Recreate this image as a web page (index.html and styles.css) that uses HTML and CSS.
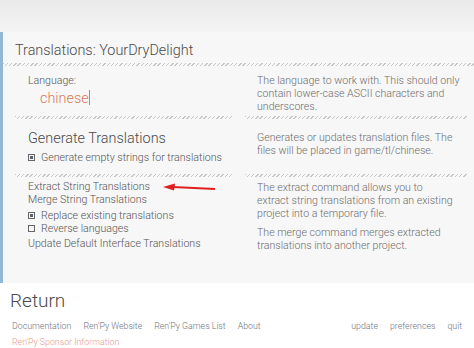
FILE: index.html
```html
<!DOCTYPE html>
<html>
<head>
<meta charset="utf-8">
<link rel="stylesheet" href="styles.css">
</head>
<body>
<div class="topband"></div>
<div class="panel">
  <div class="title">Translations: YourDryDelight</div>
  <div class="hatch full"></div>
  <div class="grid">
    <div class="cell left lang">
      <div class="label">Language:</div>
      <div class="input">chinese<span class="caret"></span></div>
    </div>
    <div class="cell right lang">
      <p>The language to work with. This should only<br>contain lower-case ASCII characters and<br>underscores.</p>
    </div>
    <div class="hatch"></div>
    <div class="hatch"></div>
    <div class="cell left gen">
      <div class="heading">Generate Translations</div>
      <div class="check"><span class="box on"></span>Generate empty strings for translations</div>
    </div>
    <div class="cell right gen">
      <p>Generates or updates translation files. The<br>files will be placed in game/tl/chinese.</p>
    </div>
    <div class="hatch"></div>
    <div class="hatch"></div>
    <div class="cell left ext">
      <div class="link">Extract String Translations</div>
      <div class="link">Merge String Translations</div>
      <div class="check first"><span class="box on"></span>Replace existing translations</div>
      <div class="check"><span class="box"></span>Reverse languages</div>
      <div class="link last">Update Default Interface Translations</div>
      <svg class="arrow" width="60" height="10" viewBox="0 0 60 10">
        <path d="M54 6 L12 4" stroke="#e02020" stroke-width="2" fill="none"/>
        <path d="M2 4 L14 0.5 L13 7.5 Z" fill="#e02020"/>
      </svg>
    </div>
    <div class="cell right ext">
      <p>The extract command allows you to<br>extract string translations from an existing<br>project into a temporary file.</p>
      <p class="second">The merge command merges extracted<br>translations into another project.</p>
    </div>
  </div>
</div>
<div class="footer">
  <div class="return">Return</div>
  <div class="links">
    <div class="group">
      <span>Documentation</span><span>Ren'Py Website</span><span>Ren'Py Games List</span><span>About</span>
    </div>
    <div class="group">
      <span>update</span><span>preferences</span><span>quit</span>
    </div>
  </div>
  <div class="sponsor">Ren'Py Sponsor Information</div>
</div>
</body>
</html>
```
FILE: styles.css
```css
html, body {
  margin: 0;
  padding: 0;
  background: #ffffff;
}
body {
  width: 474px;
  height: 348px;
  overflow: hidden;
  font-family: Roboto, "Liberation Sans", sans-serif;
  font-weight: 300;
  color: #555;
}
.topband {
  height: 32px;
  background: linear-gradient(#e9e9e9, #f4f4f4);
}
.panel {
  background: #f7f7f7;
  border-left: 3px solid #93b8d6;
  height: 251px;
  box-sizing: border-box;
  padding-top: 10px;
}
.title {
  font-size: 14.4px;
  color: #4a4a4a;
  padding-left: 12px;
  line-height: 18px;
}
.hatch {
  height: 3px;
  background: repeating-linear-gradient(135deg, #c8c8c8 0 1px, transparent 1px 3px);
}
.hatch.full {
  margin-top: 3px;
}
.grid {
  display: grid;
  grid-template-columns: 217px 222px;
  column-gap: 13px;
  padding-left: 12px;
}
.cell {
  position: relative;
}
.left {
  padding-left: 13px;
}
.right {
  padding-left: 12px;
}
.right p {
  margin: 0;
  white-space: nowrap;
  font-size: 10.6px;
  line-height: 13px;
  color: #6e6e6e;
}
.lang.left { padding-top: 8px; padding-bottom: 7px; }
.lang.right { padding-top: 7.5px; }
.label {
  font-size: 10.6px;
  line-height: 13px;
  color: #555;
}
.input {
  font-size: 14.4px;
  line-height: 20px;
  color: #d87a5c;
  padding-left: 12px;
  margin-top: 2px;
}
.caret {
  display: inline-block;
  width: 1px;
  height: 15px;
  background: #d87a5c;
  vertical-align: -2px;
}
.gen.left { padding-top: 10px; padding-bottom: 10px; }
.gen.right { padding-top: 12px; }
.heading {
  font-size: 14.4px;
  line-height: 19px;
  color: #4a4a4a;
}
.check {
  font-size: 10.6px;
  line-height: 13px;
  color: #555;
  display: flex;
  align-items: center;
  margin-top: 3px;
}
.box {
  width: 5px;
  height: 5px;
  border: 1px solid #666;
  margin-right: 6px;
  background: #f7f7f7;
  box-shadow: inset 0 0 0 1px #f7f7f7;
}
.box.on { background: #5a6470; }
.ext.left { padding-top: 4px; }
.ext.right { padding-top: 4px; }
.link {
  font-size: 10.6px;
  line-height: 12.5px;
  color: #555;
}
.check.first { margin-top: 2.5px; }
.check + .check { margin-top: 0; }
.link.last { margin-top: 3.5px; }
.right p.second { margin-top: 6px; }
.arrow {
  position: absolute;
  left: 146px;
  top: 6px;
}
.footer {
  padding: 7px 0 0 10px;
}
.return {
  font-size: 19px;
  line-height: 22px;
  color: #4a4a4a;
}
.links {
  display: flex;
  justify-content: space-between;
  margin-top: 9px;
  padding-right: 12px;
  font-size: 8.8px;
  line-height: 11px;
  color: #6e7480;
}
.group span {
  margin-right: 12px;
}
.group span:last-child { margin-right: 0; }
.links .group:first-child { padding-left: 2px; }
.sponsor {
  font-size: 8.8px;
  line-height: 11px;
  color: #e89a8a;
  padding-left: 2px;
  margin-top: 5px;
}
```
